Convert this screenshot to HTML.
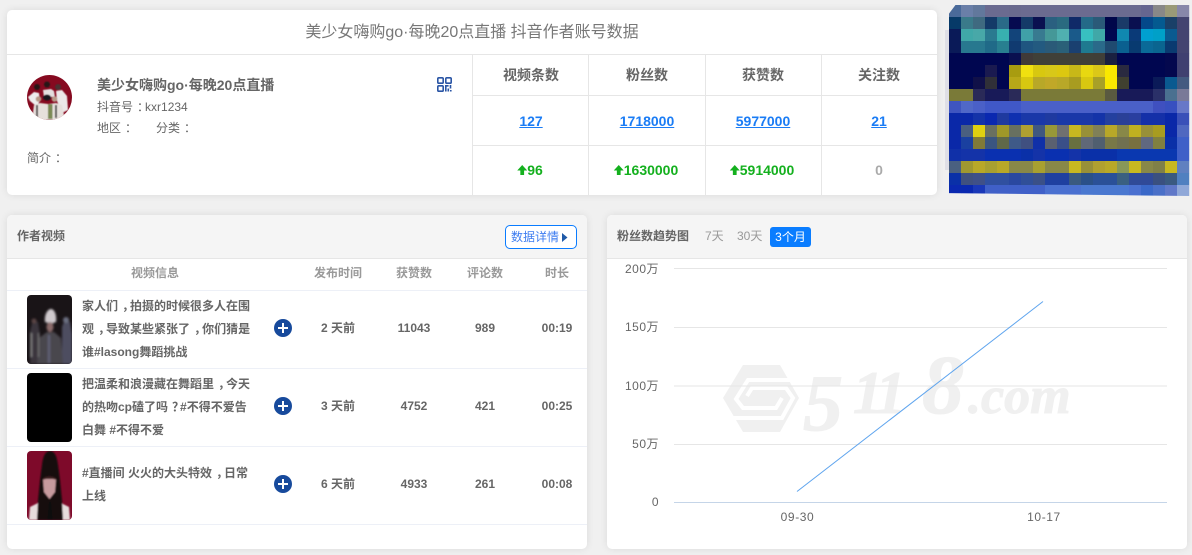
<!DOCTYPE html>
<html lang="zh">
<head>
<meta charset="utf-8">
<title>抖音作者账号数据</title>
<style>
html,body{margin:0;padding:0}
body{width:1192px;height:555px;overflow:hidden;background:#f0f0f0;position:relative;font-family:"Liberation Sans","Noto Sans CJK SC",sans-serif;color:#666}
.card{position:absolute;background:#fff;border-radius:5px;box-shadow:0 0 8px rgba(0,0,0,.09)}
.t{position:absolute;white-space:nowrap;line-height:16px}
.c{transform:translateX(-50%)}
.b{font-weight:700}
.ln{position:absolute;background:#e6e6e6}
.hd{position:absolute;left:0;right:0;top:0;height:43px;background:#f5f5f5;border-bottom:1px solid #e6e6e6;border-radius:5px 5px 0 0}
.th{font-size:12px;font-weight:700;color:#999}
.td{font-size:12px;font-weight:700;color:#666}
.m{font-size:12px;font-weight:700;color:#666;line-height:23px;position:absolute;left:75px;width:176px}
.stat{font-size:14px;font-weight:700}
a{color:#1a7cf5}
i{font-style:normal;position:relative;left:4px}
.plus{position:absolute;left:267px;width:18px;height:18px;border-radius:50%;background:#174a9c}
.plus:before{content:"";position:absolute;left:4px;top:8px;width:10px;height:2px;background:#fff}
.plus:after{content:"";position:absolute;left:8px;top:4px;width:2px;height:10px;background:#fff}
.th1{position:absolute;left:20px;width:45px;height:69px;border-radius:4px;overflow:hidden}
.mos rect{width:12.2px;height:12.2px}
</style>
</head>
<body>

<!-- pixelated image -->
<div style="position:absolute;left:945px;top:30px;width:6px;height:140px;background:#dfdfe6"></div>
<svg class="mos" width="241" height="192" viewBox="0 0 241 192" style="position:absolute;left:949px;top:4px;clip-path:polygon(3% 0,100% 0,100% 100%,0 98.500%,0 5%)">
<g transform="translate(0,1)"><rect x="0" fill="#4a6a9a"/><rect x="12" fill="#6a7fa8"/><rect x="24" fill="#62789c"/><rect x="36" fill="#6b6b90"/><rect x="48" fill="#6b6b90"/><rect x="60" fill="#6a6a8e"/><rect x="72" fill="#6b6b90"/><rect x="84" fill="#6b6b90"/><rect x="96" fill="#6b6b90"/><rect x="108" fill="#6b6b90"/><rect x="120" fill="#6b6b90"/><rect x="132" fill="#6b6b90"/><rect x="144" fill="#6b6b90"/><rect x="156" fill="#6b6b90"/><rect x="168" fill="#6b6b90"/><rect x="180" fill="#6b6b90"/><rect x="192" fill="#666690"/><rect x="204" fill="#888888"/><rect x="216" fill="#9a9a78"/><rect x="228" fill="#8888aa"/></g>
<g transform="translate(0,13)"><rect x="0" fill="#063a68"/><rect x="12" fill="#3a7a8a"/><rect x="24" fill="#3f6a80"/><rect x="36" fill="#143a68"/><rect x="48" fill="#2a6a88"/><rect x="60" fill="#060a50"/><rect x="72" fill="#143a68"/><rect x="84" fill="#0a1050"/><rect x="96" fill="#2a6080"/><rect x="108" fill="#2a6a80"/><rect x="120" fill="#102a68"/><rect x="132" fill="#246a88"/><rect x="144" fill="#2a5a78"/><rect x="156" fill="#00064a"/><rect x="168" fill="#1a3a68"/><rect x="180" fill="#0a1050"/><rect x="192" fill="#04488a"/><rect x="204" fill="#045a90"/><rect x="216" fill="#1a4068"/><rect x="228" fill="#444470"/></g>
<g transform="translate(0,25)"><rect x="0" fill="#0a1a58"/><rect x="12" fill="#40a8a8"/><rect x="24" fill="#48a8a8"/><rect x="36" fill="#2a7a90"/><rect x="48" fill="#38b0b0"/><rect x="60" fill="#12447a"/><rect x="72" fill="#40a0a8"/><rect x="84" fill="#387a90"/><rect x="96" fill="#459898"/><rect x="108" fill="#50b0b0"/><rect x="120" fill="#1a5a8a"/><rect x="132" fill="#38c0c0"/><rect x="144" fill="#40a8a8"/><rect x="156" fill="#000650"/><rect x="168" fill="#1088b0"/><rect x="180" fill="#0a3a78"/><rect x="192" fill="#00a0d0"/><rect x="204" fill="#00a0c8"/><rect x="216" fill="#0a5a90"/><rect x="228" fill="#444470"/></g>
<g transform="translate(0,37)"><rect x="0" fill="#0a1a58"/><rect x="12" fill="#28788f"/><rect x="24" fill="#28788f"/><rect x="36" fill="#206a88"/><rect x="48" fill="#287f90"/><rect x="60" fill="#103a70"/><rect x="72" fill="#1f5580"/><rect x="84" fill="#235a80"/><rect x="96" fill="#2a5a78"/><rect x="108" fill="#2a6078"/><rect x="120" fill="#1a4070"/><rect x="132" fill="#1f7a90"/><rect x="144" fill="#2a6a8a"/><rect x="156" fill="#1f4a70"/><rect x="168" fill="#0a6090"/><rect x="180" fill="#083a70"/><rect x="192" fill="#0a6a98"/><rect x="204" fill="#0a6590"/><rect x="216" fill="#0a3a70"/><rect x="228" fill="#444470"/></g>
<g transform="translate(0,49)"><rect x="0" fill="#000650"/><rect x="12" fill="#000650"/><rect x="24" fill="#000650"/><rect x="36" fill="#000650"/><rect x="48" fill="#000650"/><rect x="60" fill="#0a1050"/><rect x="72" fill="#403a38"/><rect x="84" fill="#404038"/><rect x="96" fill="#404038"/><rect x="108" fill="#404038"/><rect x="120" fill="#404038"/><rect x="132" fill="#404038"/><rect x="144" fill="#403f38"/><rect x="156" fill="#1a2040"/><rect x="168" fill="#000650"/><rect x="180" fill="#000650"/><rect x="192" fill="#000650"/><rect x="204" fill="#000650"/><rect x="216" fill="#04084e"/><rect x="228" fill="#404070"/></g>
<g transform="translate(0,61)"><rect x="0" fill="#000650"/><rect x="12" fill="#000650"/><rect x="24" fill="#000650"/><rect x="36" fill="#1a1a50"/><rect x="48" fill="#000650"/><rect x="60" fill="#a89c10"/><rect x="72" fill="#f0e010"/><rect x="84" fill="#d8c810"/><rect x="96" fill="#d8c818"/><rect x="108" fill="#dcc810"/><rect x="120" fill="#c8b818"/><rect x="132" fill="#e8d810"/><rect x="144" fill="#dcc818"/><rect x="156" fill="#fae800"/><rect x="168" fill="#2a2a40"/><rect x="180" fill="#000650"/><rect x="192" fill="#000650"/><rect x="204" fill="#000650"/><rect x="216" fill="#04084e"/><rect x="228" fill="#404070"/></g>
<g transform="translate(0,73)"><rect x="0" fill="#000650"/><rect x="12" fill="#000650"/><rect x="24" fill="#101048"/><rect x="36" fill="#303038"/><rect x="48" fill="#000650"/><rect x="60" fill="#b8a818"/><rect x="72" fill="#d8c810"/><rect x="84" fill="#b8a828"/><rect x="96" fill="#c0a828"/><rect x="108" fill="#b8a828"/><rect x="120" fill="#a89c20"/><rect x="132" fill="#d8c810"/><rect x="144" fill="#a8a028"/><rect x="156" fill="#fae800"/><rect x="168" fill="#404030"/><rect x="180" fill="#000650"/><rect x="192" fill="#000650"/><rect x="204" fill="#0a1a58"/><rect x="216" fill="#0a5a90"/><rect x="228" fill="#445a80"/></g>
<g transform="translate(0,85)"><rect x="0" fill="#7a7a38"/><rect x="12" fill="#7a7a38"/><rect x="24" fill="#2a2a58"/><rect x="36" fill="#181a58"/><rect x="48" fill="#181a58"/><rect x="60" fill="#2a2a58"/><rect x="72" fill="#7a7a38"/><rect x="84" fill="#7a7a38"/><rect x="96" fill="#7a7a38"/><rect x="108" fill="#7a7a38"/><rect x="120" fill="#7a7a38"/><rect x="132" fill="#7a7a38"/><rect x="144" fill="#7a7a38"/><rect x="156" fill="#5a5a40"/><rect x="168" fill="#181a58"/><rect x="180" fill="#181a58"/><rect x="192" fill="#181a58"/><rect x="204" fill="#2a3068"/><rect x="216" fill="#4a7090"/><rect x="228" fill="#7a7a98"/></g>
<g transform="translate(0,97)"><rect x="0" fill="#3f55c0"/><rect x="12" fill="#5068c8"/><rect x="24" fill="#4a60c8"/><rect x="36" fill="#4058c8"/><rect x="48" fill="#4058c8"/><rect x="60" fill="#4058c8"/><rect x="72" fill="#4a60c8"/><rect x="84" fill="#4a60c8"/><rect x="96" fill="#4a60c8"/><rect x="108" fill="#4a60c8"/><rect x="120" fill="#4a60c8"/><rect x="132" fill="#4a60c8"/><rect x="144" fill="#4a60c8"/><rect x="156" fill="#4a60c8"/><rect x="168" fill="#4a60c8"/><rect x="180" fill="#4a60c8"/><rect x="192" fill="#4a60c8"/><rect x="204" fill="#3f50c0"/><rect x="216" fill="#3850c0"/><rect x="228" fill="#6878c8"/></g>
<g transform="translate(0,109)"><rect x="0" fill="#0a28a8"/><rect x="12" fill="#0a28a8"/><rect x="24" fill="#1433a8"/><rect x="36" fill="#0a28b0"/><rect x="48" fill="#1f3a9f"/><rect x="60" fill="#0f30b0"/><rect x="72" fill="#1a38a8"/><rect x="84" fill="#1a38a8"/><rect x="96" fill="#1f3aa0"/><rect x="108" fill="#1a38a8"/><rect x="120" fill="#1a38a8"/><rect x="132" fill="#1a38a8"/><rect x="144" fill="#1433a8"/><rect x="156" fill="#24409f"/><rect x="168" fill="#2a4098"/><rect x="180" fill="#2a3f9f"/><rect x="192" fill="#1430a8"/><rect x="204" fill="#1430a8"/><rect x="216" fill="#0a28a8"/><rect x="228" fill="#3a50b8"/></g>
<g transform="translate(0,121)"><rect x="0" fill="#0a28a8"/><rect x="12" fill="#4a5f80"/><rect x="24" fill="#e0d010"/><rect x="36" fill="#6a7060"/><rect x="48" fill="#a09828"/><rect x="60" fill="#687060"/><rect x="72" fill="#b0a030"/><rect x="84" fill="#405880"/><rect x="96" fill="#989838"/><rect x="108" fill="#707070"/><rect x="120" fill="#c8b820"/><rect x="132" fill="#989038"/><rect x="144" fill="#808058"/><rect x="156" fill="#b8a828"/><rect x="168" fill="#888848"/><rect x="180" fill="#c0b020"/><rect x="192" fill="#989038"/><rect x="204" fill="#a89c20"/><rect x="216" fill="#0a28a8"/><rect x="228" fill="#5068c0"/></g>
<g transform="translate(0,133)"><rect x="0" fill="#0a28a8"/><rect x="12" fill="#1a40a0"/><rect x="24" fill="#807a38"/><rect x="36" fill="#3a5580"/><rect x="48" fill="#606848"/><rect x="60" fill="#3f5a88"/><rect x="72" fill="#405080"/><rect x="84" fill="#1030a8"/><rect x="96" fill="#5a6070"/><rect x="108" fill="#3a4f88"/><rect x="120" fill="#687040"/><rect x="132" fill="#606878"/><rect x="144" fill="#505f70"/><rect x="156" fill="#787848"/><rect x="168" fill="#707050"/><rect x="180" fill="#787040"/><rect x="192" fill="#606880"/><rect x="204" fill="#808040"/><rect x="216" fill="#0a30a8"/><rect x="228" fill="#3f60c8"/></g>
<g transform="translate(0,145)"><rect x="0" fill="#1030a8"/><rect x="12" fill="#1433a8"/><rect x="24" fill="#1433a8"/><rect x="36" fill="#0a30b0"/><rect x="48" fill="#0a30b0"/><rect x="60" fill="#0a30b0"/><rect x="72" fill="#0a30a8"/><rect x="84" fill="#1433a8"/><rect x="96" fill="#0a30b0"/><rect x="108" fill="#0a30b0"/><rect x="120" fill="#1433a8"/><rect x="132" fill="#0a30a8"/><rect x="144" fill="#0a30a8"/><rect x="156" fill="#0a30a8"/><rect x="168" fill="#0a38b0"/><rect x="180" fill="#0a38b0"/><rect x="192" fill="#0a38b0"/><rect x="204" fill="#0a38b0"/><rect x="216" fill="#0a38b0"/><rect x="228" fill="#3f60c8"/></g>
<g transform="translate(0,157)"><rect x="0" fill="#4a6080"/><rect x="12" fill="#a09830"/><rect x="24" fill="#b8a828"/><rect x="36" fill="#a8a030"/><rect x="48" fill="#b8a828"/><rect x="60" fill="#888848"/><rect x="72" fill="#888848"/><rect x="84" fill="#a8a030"/><rect x="96" fill="#888848"/><rect x="108" fill="#888848"/><rect x="120" fill="#c8b820"/><rect x="132" fill="#989038"/><rect x="144" fill="#b0a030"/><rect x="156" fill="#b8a828"/><rect x="168" fill="#889858"/><rect x="180" fill="#c8b820"/><rect x="192" fill="#888848"/><rect x="204" fill="#808048"/><rect x="216" fill="#c8b820"/><rect x="228" fill="#6080c0"/></g>
<g transform="translate(0,169)"><rect x="0" fill="#0a30a8"/><rect x="12" fill="#3f5080"/><rect x="24" fill="#3f5088"/><rect x="36" fill="#3050a0"/><rect x="48" fill="#3050a0"/><rect x="60" fill="#2a48a0"/><rect x="72" fill="#304f98"/><rect x="84" fill="#3a5088"/><rect x="96" fill="#1f40a0"/><rect x="108" fill="#1f40a0"/><rect x="120" fill="#3a5a80"/><rect x="132" fill="#2a5088"/><rect x="144" fill="#2a5098"/><rect x="156" fill="#2a5098"/><rect x="168" fill="#3a6080"/><rect x="180" fill="#304a98"/><rect x="192" fill="#304a98"/><rect x="204" fill="#3a5080"/><rect x="216" fill="#3a5a80"/><rect x="228" fill="#5080c0"/></g>
<g transform="translate(0,181)"><rect x="0" fill="#0a28b0"/><rect x="12" fill="#0a28b0"/><rect x="24" fill="#1a38b8"/><rect x="36" fill="#4060c8"/><rect x="48" fill="#4060c8"/><rect x="60" fill="#4060c8"/><rect x="72" fill="#4060c8"/><rect x="84" fill="#4060c8"/><rect x="96" fill="#4a70d0"/><rect x="108" fill="#4a70d0"/><rect x="120" fill="#4a70d0"/><rect x="132" fill="#4a78d0"/><rect x="144" fill="#4a78d0"/><rect x="156" fill="#4a78d0"/><rect x="168" fill="#4a78d0"/><rect x="180" fill="#4a70d0"/><rect x="192" fill="#3a68c8"/><rect x="204" fill="#4a70c8"/><rect x="216" fill="#6078c8"/><rect x="228" fill="#90a8d8"/></g>
</svg>

<!-- top card -->
<div class="card" style="left:7px;top:10px;width:930px;height:185px">
  <div class="t c" style="left:465px;top:14px;font-size:16px;line-height:18px;color:#777">美少女嗨购go·每晚20点直播 抖音作者账号数据</div>
  <div class="ln" style="left:0;top:44px;width:930px;height:1px"></div>
  <div class="ln" style="left:465px;top:44px;width:1px;height:141px"></div>
  <div class="ln" style="left:581px;top:44px;width:1px;height:141px"></div>
  <div class="ln" style="left:698px;top:44px;width:1px;height:141px"></div>
  <div class="ln" style="left:814px;top:44px;width:1px;height:141px"></div>
  <div class="ln" style="left:465px;top:85px;width:465px;height:1px"></div>
  <div class="ln" style="left:465px;top:135px;width:465px;height:1px"></div>

  <svg width="45" height="45" viewBox="0 0 45 45" style="position:absolute;left:20px;top:65px;border-radius:50%">
    <defs><filter id="s1"><feGaussianBlur stdDeviation=".6"/></filter></defs>
    <rect width="45" height="45" fill="#860a20"/>
    <g filter="url(#s1)">
      <path d="M1 22l6-5 5 1 1 8-2 3-2 2-6-5z" fill="#eee"/>
      <path d="M16 15l8-1 3 2 1 6h-11z" fill="#e4dede"/>
      <path d="M29 16l6-1 5 6 1 14-6 3-5-12z" fill="#ece8e8"/>
      <circle cx="10" cy="12" r="3" fill="#251818"/><circle cx="20" cy="9.500" r="3" fill="#251818"/><circle cx="31" cy="12" r="3" fill="#4a3030"/>
      <path d="M7 30l6-2 8 1 8-1 6 2 3 15H5z" fill="#e6e0dc"/>
      <circle cx="11.500" cy="24" r="2.800" fill="#b89a88"/><circle cx="27.500" cy="24" r="2.800" fill="#b89a88"/>
      <ellipse cx="20" cy="22.500" rx="4" ry="3" fill="#15151a"/>
      <rect x="9" y="30" width="2" height="14" fill="#555"/><rect x="21" y="29" width="4.500" height="15" fill="#7b8a55"/><rect x="28" y="30" width="2" height="13" fill="#555"/>
    </g>
  </svg>
  <div class="t b" style="left:90px;top:67px;font-size:14px;line-height:16px">美少女嗨购go·每晚20点直播</div>
  <div class="t" style="left:90px;top:89px;font-size:12px">抖音号<i>：</i>kxr1234</div>
  <div class="t" style="left:90px;top:110px;font-size:12px">地区<i>：</i></div>
  <div class="t" style="left:149px;top:110px;font-size:12px">分类<i>：</i></div>
  <div class="t" style="left:20px;top:140px;font-size:12px">简介<i>：</i></div>

  <svg width="15" height="15" viewBox="0 0 15 15" style="position:absolute;left:430px;top:67px" fill="none" stroke="#2a55a5" stroke-width="1.600">
    <rect x=".8" y=".8" width="5.400" height="5.400" rx="1"/><rect x="8.800" y=".8" width="5.400" height="5.400" rx="1"/><rect x=".8" y="8.800" width="5.400" height="5.400" rx="1"/>
    <path d="M8.800 14.500V8.800h2.800M13.500 8v3.500M11.300 11.500v3M13.800 13v1.500"/>
  </svg>

  <div class="t c b" style="left:524px;top:56px;font-size:14px;line-height:18px;color:#666">视频条数</div>
  <div class="t c b" style="left:640px;top:56px;font-size:14px;line-height:18px;color:#666">粉丝数</div>
  <div class="t c b" style="left:756px;top:56px;font-size:14px;line-height:18px;color:#666">获赞数</div>
  <div class="t c b" style="left:872px;top:56px;font-size:14px;line-height:18px;color:#666">关注数</div>

  <div class="t c stat" style="left:524px;top:103px"><a href="#">127</a></div>
  <div class="t c stat" style="left:640px;top:103px"><a href="#">1718000</a></div>
  <div class="t c stat" style="left:756px;top:103px"><a href="#">5977000</a></div>
  <div class="t c stat" style="left:872px;top:103px"><a href="#">21</a></div>

  <div class="t c stat" style="left:523px;top:152px;color:#14b01e"><svg width="10" height="10" viewBox="0 0 9 9"><path d="M4.500 0L9 5H6.200v4H2.800V5H0z" fill="#14b01e"/></svg>96</div>
  <div class="t c stat" style="left:639px;top:152px;color:#14b01e"><svg width="10" height="10" viewBox="0 0 9 9"><path d="M4.500 0L9 5H6.200v4H2.800V5H0z" fill="#14b01e"/></svg>1630000</div>
  <div class="t c stat" style="left:755px;top:152px;color:#14b01e"><svg width="10" height="10" viewBox="0 0 9 9"><path d="M4.500 0L9 5H6.200v4H2.800V5H0z" fill="#14b01e"/></svg>5914000</div>
  <div class="t c stat" style="left:872px;top:152px;color:#aaa">0</div>
</div>

<!-- video card -->
<div class="card" style="left:7px;top:215px;width:580px;height:334px">
  <div class="hd"></div>
  <div class="t b" style="left:10px;top:13px;font-size:12px;color:#666">作者视频</div>
  <div style="position:absolute;left:498px;top:10px;width:70px;height:22px;border:1px solid #0a7cff;border-radius:5px;background:#fff"></div>
  <div class="t" style="left:504px;top:14px;font-size:12px;color:#3d7cf0">数据详情</div>
  <svg width="6" height="9" viewBox="0 0 6 9" style="position:absolute;left:555px;top:18px"><path d="M0 0l5.500 4.500L0 9z" fill="#1f5aa8"/></svg>

  <div class="t c th" style="left:148px;top:50px">视频信息</div>
  <div class="t c th" style="left:331px;top:50px">发布时间</div>
  <div class="t c th" style="left:407px;top:50px">获赞数</div>
  <div class="t c th" style="left:478px;top:50px">评论数</div>
  <div class="t c th" style="left:550px;top:50px">时长</div>

  <div class="ln" style="left:0;top:75px;width:580px;height:1px;background:#edf0f7"></div>
  <div class="ln" style="left:0;top:153px;width:580px;height:1px;background:#edf0f7"></div>
  <div class="ln" style="left:0;top:231px;width:580px;height:1px;background:#edf0f7"></div>
  <div class="ln" style="left:0;top:309px;width:580px;height:1px;background:#edf0f7"></div>

  <!-- row 1 -->
  <div class="th1" style="top:80px">
    <svg width="45" height="69" viewBox="0 0 45 69">
      <defs><filter id="s2"><feGaussianBlur stdDeviation="1.100"/></filter></defs>
      <rect width="45" height="69" fill="#191417"/>
      <g filter="url(#s2)">
        <path d="M3 69V36l3-11 5 2 2 12v30z" fill="#3a363c"/>
        <path d="M35 69V32l3-8 5 3 2 12v30z" fill="#4e4e60"/>
        <circle cx="7" cy="26" r="2.500" fill="#5a4445"/><circle cx="39" cy="25" r="3" fill="#6a6e80"/>
        <path d="M10 69l2-26 8-6h7l7 6 2 26z" fill="#4a464d"/>
        <path d="M18 27c-1-8 3-13 6-13s6 5 5 13l-5 2z" fill="#cfc9cd"/>
        <ellipse cx="23" cy="32" rx="3.500" ry="5" fill="#8a6a6a"/>
        <rect x="3.500" y="38" width="1.500" height="24" fill="#8a8a8a"/><rect x="11" y="38" width="1" height="24" fill="#7a7a7a"/>
        <rect x="21" y="40" width="2" height="28" fill="#63637a"/>
      </g>
    </svg>
  </div>
  <div class="m" style="top:80px">家人们<i>，</i>拍摄的时候很多人在围观<i>，</i>导致某些紧张了<i>，</i>你们猜是谁#lasong舞蹈挑战</div>
  <div class="plus" style="top:104px"></div>
  <div class="t c td" style="left:331px;top:105px">2 天前</div>
  <div class="t c td" style="left:407px;top:105px">11043</div>
  <div class="t c td" style="left:478px;top:105px">989</div>
  <div class="t c td" style="left:550px;top:105px">00:19</div>

  <!-- row 2 -->
  <div class="th1" style="top:158px;background:#000"></div>
  <div class="m" style="top:158px">把温柔和浪漫藏在舞蹈里<i>，</i>今天的热吻cp磕了吗<i>？</i>#不得不爱告白舞 #不得不爱</div>
  <div class="plus" style="top:182px"></div>
  <div class="t c td" style="left:331px;top:183px">3 天前</div>
  <div class="t c td" style="left:407px;top:183px">4752</div>
  <div class="t c td" style="left:478px;top:183px">421</div>
  <div class="t c td" style="left:550px;top:183px">00:25</div>

  <!-- row 3 -->
  <div class="th1" style="top:236px">
    <svg width="45" height="69" viewBox="0 0 45 69">
      <defs><filter id="s3"><feGaussianBlur stdDeviation=".7"/></filter></defs>
      <rect width="45" height="69" fill="#7e0a2a"/>
      <g filter="url(#s3)">
        <path d="M2 69l1-13 8-4 4 17zM43 69l-1-13-8-4-3 17z" fill="#e6dcdc"/>
        <path d="M23 0c5 0 7 6 8 14l2 15 2 20 1 20H10l1-20 2-20 2-15c1-8 3-14 8-14z" fill="#16090d"/>
        <path d="M16 28c2-3 11-3 13 0l-1 13-5.500 7-5.500-7z" fill="#c79a9e"/>
        <path d="M15 29c3-5 12-5 15 0l-4-1h-7z" fill="#3a1a1e"/>
        <path d="M22 51h2l1.500 18h-5z" fill="#0c0c0c"/>
      </g>
    </svg>
  </div>
  <div class="m" style="top:247px">#直播间 火火的大头特效<i>，</i>日常上线</div>
  <div class="plus" style="top:260px"></div>
  <div class="t c td" style="left:331px;top:261px">6 天前</div>
  <div class="t c td" style="left:407px;top:261px">4933</div>
  <div class="t c td" style="left:478px;top:261px">261</div>
  <div class="t c td" style="left:550px;top:261px">00:08</div>
</div>

<!-- chart card -->
<div class="card" style="left:607px;top:215px;width:580px;height:334px">
  <div class="hd"></div>
  <div class="t b" style="left:10px;top:13px;font-size:12px;color:#666">粉丝数趋势图</div>
  <div class="t" style="left:98px;top:13px;font-size:12px;color:#999">7天</div>
  <div class="t" style="left:130px;top:13px;font-size:12px;color:#999">30天</div>
  <div style="position:absolute;left:163px;top:12px;width:41px;height:20px;background:#0a7dff;border-radius:3px;color:#fff;font-size:12px;line-height:20px;text-align:center">3个月</div>
</div>

<svg width="580" height="290" viewBox="607 259 580 290" style="position:absolute;left:607px;top:259px">
  <!-- watermark -->
  <path d="M723 398L743 365H780L799 398L780 432H743z" fill="#f0f0f0"/>
  <path d="M795 380H748L736 399L743 408H776L782 398" fill="none" stroke="#fff" stroke-width="4"/>
  <path d="M732 418H782L793 398L786 388H752L747 396" fill="none" stroke="#fff" stroke-width="4"/>
  <g fill="#f0f0f0" stroke="#f0f0f0" stroke-width="1" font-family="Liberation Serif" font-style="italic" font-weight="700">
    <text x="803" y="430" font-size="80">5</text>
    <text x="853" y="413" font-size="60" letter-spacing="-4">11</text>
    <text x="922" y="413" font-size="84">8</text>
    <text x="968" y="413" font-size="52">.com</text>
  </g>
  <g stroke="#e6e6e6" stroke-width="1">
    <path d="M674 268.500H1167M674 327.500H1167M674 386H1167M674 444.500H1167"/>
  </g>
  <path d="M674 502.500H1167" stroke="#c5d5e8" stroke-width="1"/>
  <path d="M797 491.500L1043 301.500" stroke="#5ea4ee" stroke-width="1" fill="none"/>
  <g font-family="Liberation Sans,Noto Sans CJK SC,sans-serif" font-size="12" fill="#666" text-anchor="end" letter-spacing=".5">
    <text x="659" y="273">200万</text>
    <text x="659" y="331">150万</text>
    <text x="659" y="390">100万</text>
    <text x="659" y="448">50万</text>
    <text x="659" y="506">0</text>
  </g>
  <g font-family="Liberation Sans,Noto Sans CJK SC,sans-serif" font-size="12" fill="#666" text-anchor="middle" letter-spacing=".6">
    <text x="797.500" y="521">09-30</text>
    <text x="1044" y="521">10-17</text>
  </g>
</svg>

</body>
</html>
